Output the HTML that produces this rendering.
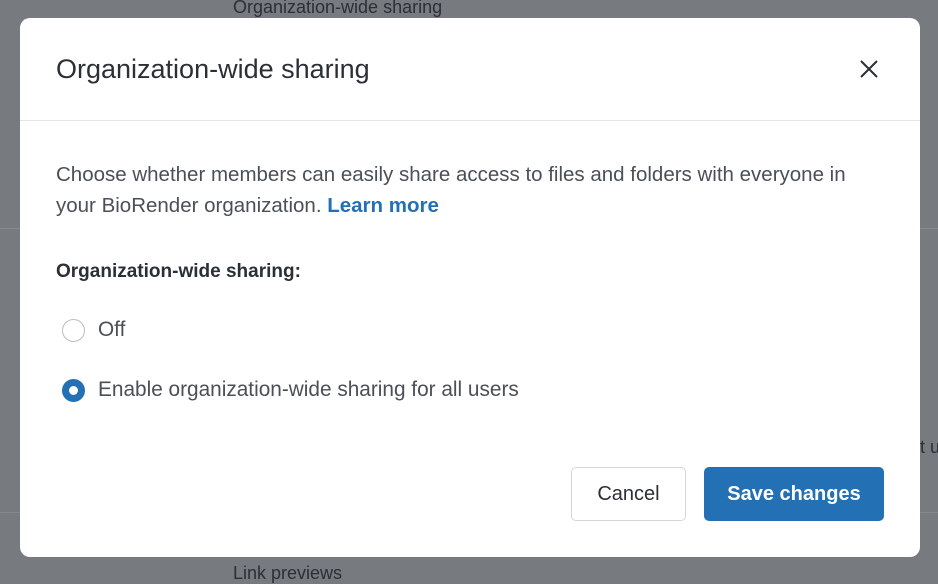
<!DOCTYPE html>
<html><head><style>
body{margin:0;width:938px;height:575px;background:#777b80;font-family:"Liberation Sans",sans-serif;position:relative;overflow:hidden}
.bg{position:absolute;color:#2b2f36;font-size:18px;white-space:nowrap}
.line{position:absolute;left:0;right:0;height:1px;background:#858a8f}
.modal{position:absolute;left:20px;top:18px;width:900px;height:539px;background:#fff;border-radius:10px}
.title{position:absolute;left:36px;top:36px;font-size:27px;color:#2b2f36;white-space:nowrap}
.hr{position:absolute;left:0;right:0;top:102px;height:1px;background:#e4e6ea}
.p{position:absolute;left:36px;top:141px;width:830px;font-size:20.5px;line-height:31px;color:#4a4f58}
.p a{color:#2470b5;font-weight:bold;text-decoration:none}
.lbl{position:absolute;left:36px;top:243px;font-size:19px;color:#2b2f36;font-weight:bold}
.r{position:absolute;left:42px;font-size:20.8px;color:#4a4f58}
.r i{position:absolute;left:0;top:1px;width:23px;height:23px;border:1.5px solid #b9bdc4;border-radius:50%;box-sizing:border-box}
.r span{position:absolute;left:36px;top:0px;white-space:nowrap}
.btn{position:absolute;top:449px;height:54px;border-radius:5px;font-size:20px;display:flex;align-items:center;justify-content:center;box-sizing:border-box}
</style></head><body>
<div class="bg" style="left:233px;top:-3px">Organization-wide sharing</div>
<div class="line" style="top:228px"></div>
<div class="line" style="top:512px"></div>
<div class="bg" style="left:920px;top:437px">t u</div>
<div class="bg" style="left:233px;top:563px">Link previews</div>
<div class="modal">
<div class="title">Organization-wide sharing</div>
<svg style="position:absolute;left:839px;top:41px" width="20" height="20" viewBox="0 0 20 20"><path d="M2 2L18 18M18 2L2 18" stroke="#2b2f36" stroke-width="2" fill="none"/></svg>
<div class="hr"></div>
<div class="p">Choose whether members can easily share access to files and folders with everyone in your BioRender organization. <a>Learn more</a></div>
<div class="lbl">Organization-wide sharing:</div>
<div class="r" style="top:300px"><i></i><span>Off</span></div>
<div class="r" style="top:360px"><i style="border:7px solid #2470b5"></i><span>Enable organization-wide sharing for all users</span></div>
<div class="btn" style="left:551px;width:115px;border:1px solid #d2d6de;color:#2b2f36">Cancel</div>
<div class="btn" style="left:684px;width:180px;background:#2470b5;color:#fff;font-weight:bold">Save changes</div>
</div>
</body></html>
